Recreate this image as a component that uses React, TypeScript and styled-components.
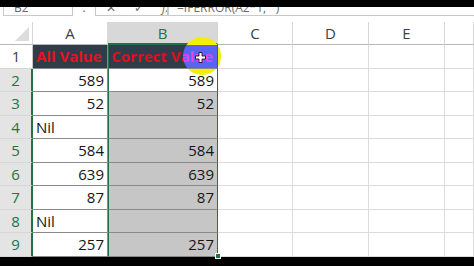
import React from 'react';
import styled, { createGlobalStyle } from 'styled-components';

const GlobalStyle = createGlobalStyle`
  html, body { margin: 0; padding: 0; background: #000; }
  * { box-sizing: border-box; }
`;

const ROW_H = 23.5;
const COLS = [33, 75, 110, 75, 76, 76];

type Cell = { text?: string; align?: 'left' | 'right'; kind?: 'head' | 'sel' | 'plain' };

const rows: Cell[][] = [
  [{ text: 'All Value', kind: 'head' }, { text: 'Correct Value', kind: 'head' }],
  [{ text: '589', align: 'right' }, { text: '589', align: 'right', kind: 'plain' }],
  [{ text: '52', align: 'right' }, { text: '52', align: 'right', kind: 'sel' }],
  [{ text: 'Nil', align: 'left' }, { kind: 'sel' }],
  [{ text: '584', align: 'right' }, { text: '584', align: 'right', kind: 'sel' }],
  [{ text: '639', align: 'right' }, { text: '639', align: 'right', kind: 'sel' }],
  [{ text: '87', align: 'right' }, { text: '87', align: 'right', kind: 'sel' }],
  [{ text: 'Nil', align: 'left' }, { kind: 'sel' }],
  [{ text: '257', align: 'right' }, { text: '257', align: 'right', kind: 'sel' }],
];

const Screen = styled.div`
  width: 474px;
  height: 266px;
  overflow: hidden;
  background: #000;
  display: flex;
  flex-direction: column;
  font-family: "Open Sans", "Noto Sans", sans-serif;
`;

const TopBar = styled.div`
  height: 7px;
  flex: none;
  background: #000;
`;

const FormulaBar = styled.div`
  height: 9px;
  flex: none;
  background: #fff;
  display: flex;
  align-items: stretch;
  padding-left: 3px;
  overflow: hidden;
`;

const Box = styled.div<{ $w: number; $pad?: number }>`
  width: ${(p) => p.$w}px;
  flex: none;
  border: 1px solid #c9c9c9;
  border-top: none;
  background: #fff;
  overflow: hidden;
  padding-left: ${(p) => p.$pad ?? 8}px;
  display: flex;
  gap: 18px;
`;

const CutText = styled.span`
  font-size: 12px;
  line-height: 12px;
  margin-top: -5px;
  color: #6a6a6a;
  white-space: nowrap;
`;

const Sep = styled.div`
  width: 22px;
  flex: none;
  display: flex;
  justify-content: center;
`;

const Gap = styled.div`
  height: 6px;
  flex: none;
  background: #fff;
`;

const Sheet = styled.div`
  position: relative;
  display: grid;
  grid-template-columns: ${COLS.map((c) => c + 'px').join(' ')} 1fr;
  grid-template-rows: 23px repeat(9, ${ROW_H}px);
  background: #fff;
  flex: none;
`;

const Corner = styled.div`
  background: #fff;
  border-right: 1px solid #d6d6d6;
  border-bottom: 1px solid #b8b8b8;
  position: relative;
  &::after {
    content: '';
    position: absolute;
    right: 3px;
    bottom: 3px;
    width: 0;
    height: 0;
    border-left: 14px solid transparent;
    border-bottom: 14px solid #dcdcdc;
  }
`;

const ColHead = styled.div<{ $sel?: boolean }>`
  background: ${(p) => (p.$sel ? '#d8d8d8' : '#fff')};
  color: ${(p) => (p.$sel ? '#217346' : '#404040')};
  border-right: 1px solid #d6d6d6;
  border-bottom: ${(p) => (p.$sel ? '2px solid #217346' : '1px solid #b8b8b8')};
  display: flex;
  align-items: center;
  justify-content: center;
  font-size: 15px;
`;

const RowHead = styled.div<{ $sel?: boolean }>`
  background: ${(p) => (p.$sel ? '#e4e4e4' : '#fff')};
  color: ${(p) => (p.$sel ? '#217346' : '#404040')};
  border-right: ${(p) => (p.$sel ? '2px solid #217346' : '1px solid #c6c6c6')};
  border-bottom: 1px solid #d6d6d6;
  display: flex;
  align-items: center;
  justify-content: center;
  font-size: 15px;
`;

const DataCell = styled.div<{ $align?: string; $kind?: string; $colB?: boolean }>`
  position: relative;
  overflow: hidden;
  white-space: nowrap;
  display: flex;
  align-items: center;
  justify-content: ${(p) => (p.$align === 'right' ? 'flex-end' : 'flex-start')};
  padding: 0 3px;
  font-size: 15px;
  color: #161616;
  background: ${(p) => (p.$kind === 'head' ? '#2f3d4b' : p.$kind === 'sel' ? '#c6c6c6' : '#fff')};
  border-bottom: 1px solid #8a8a8a;
  border-right: 1px solid #8a8a8a;
  ${(p) =>
    p.$colB &&
    `border-left: 1.5px solid #217346; border-right: 1.5px solid #217346;`}
  ${(p) => p.$kind === 'head' && `color: #e8101c; font-weight: 700; z-index: 2;`}
`;

const EmptyCell = styled.div`
  border-right: 1px solid #dcdcdc;
  border-bottom: 1px solid #dcdcdc;
  background: #fff;
`;

const Glow = styled.div`
  position: absolute;
  left: 183px;
  top: 15px;
  width: 38px;
  height: 38px;
  border-radius: 50%;
  background: #f2f000;
  z-index: 1;
  pointer-events: none;
`;

const InnerGlow = styled.div`
  position: absolute;
  left: 73.5px;
  top: -8px;
  width: 38px;
  height: 38px;
  border-radius: 50%;
  background: #3434ea;
  mix-blend-mode: screen;
`;

const Handle = styled.div`
  position: absolute;
  left: 215px;
  top: 231px;
  width: 6px;
  height: 6px;
  background: #217346;
  border: 1px solid #fff;
  z-index: 3;
`;

const Cursor = styled.svg`
  position: absolute;
  left: 195px;
  top: 30px;
  z-index: 4;
`;

const Footer = styled.div`
  flex: 1;
  background: #000;
`;

export default function App() {
  return (
    <>
      <GlobalStyle />
      <Screen>
        <TopBar />
        <FormulaBar>
          <Box $w={70} $pad={10}>
            <CutText>B2</CutText>
          </Box>
          <Sep>
            <CutText>:</CutText>
          </Sep>
          <Box $w={73} $pad={10}>
            <CutText>✕</CutText>
            <CutText>✓</CutText>
            <CutText>
              <i>fx</i>
            </CutText>
          </Box>
          <div style={{ width: 6 }} />
          <Box $w={310} $pad={8}>
            <CutText>=IFERROR(A2*1,"")</CutText>
          </Box>
        </FormulaBar>
        <Gap />
        <Sheet>
          <Corner />
          {['A', 'B', 'C', 'D', 'E', ''].map((l) => (
            <ColHead key={l || 'F'} $sel={l === 'B'}>
              {l}
            </ColHead>
          ))}
          {rows.map((r, i) => (
            <React.Fragment key={i}>
              <RowHead $sel={i > 0}>{i + 1}</RowHead>
              {r.map((c, j) => (
                <DataCell key={j} $align={c.align} $kind={c.kind} $colB={j === 1}>
                  {c.text}
                  {i === 0 && j === 1 && <InnerGlow />}
                </DataCell>
              ))}
              {[0, 1, 2, 3].map((k) => (
                <EmptyCell key={'e' + k} />
              ))}
            </React.Fragment>
          ))}
          <Glow />
          <Handle />
          <Cursor width="11" height="11" viewBox="0 0 11 11">
            <path d="M4 0.5h3v3.5h3.5v3h-3.5v3.5h-3v-3.5h-3.5v-3h3.5z" fill="#fff" stroke="#000" strokeWidth="0.8" />
          </Cursor>
        </Sheet>
        <Footer />
      </Screen>
    </>
  );
}
